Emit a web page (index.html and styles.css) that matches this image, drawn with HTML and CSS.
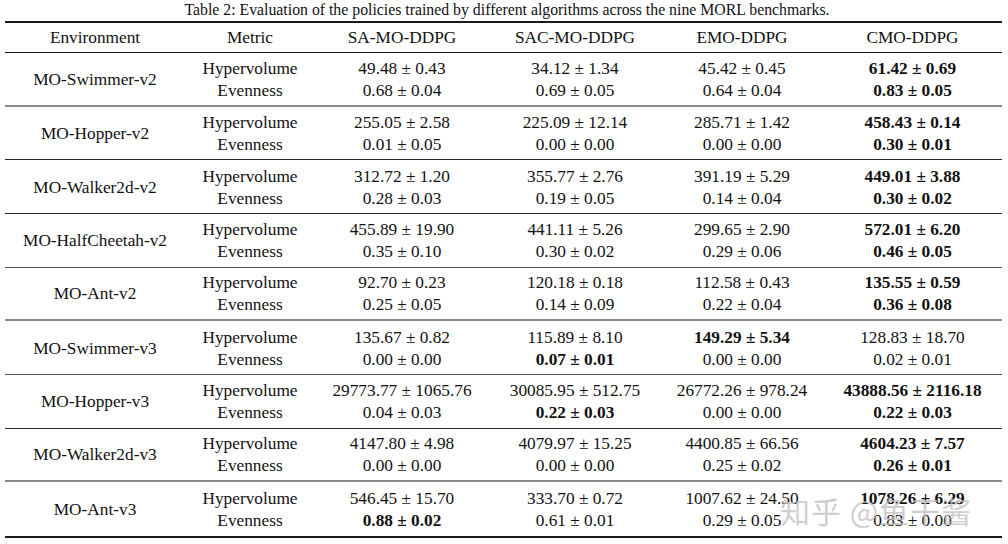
FILE: index.html
```html
<!DOCTYPE html>
<html>
<head>
<meta charset="utf-8">
<link rel="stylesheet" href="styles.css">
</head>
<body>
<div class="page">
  <div class="caption">Table 2: Evaluation of the policies trained by different algorithms across the nine MORL benchmarks.</div>
  <div class="table">
    <div class="row head">
      <div class="cell">Environment</div>
      <div class="cell">Metric</div>
      <div class="cell">SA-MO-DDPG</div>
      <div class="cell">SAC-MO-DDPG</div>
      <div class="cell">EMO-DDPG</div>
      <div class="cell">CMO-DDPG</div>
    </div>
    <div class="row line-gray">
      <div class="cell">MO-Swimmer-v2</div>
      <div class="cell"><span>Hypervolume</span><span>Evenness</span></div>
      <div class="cell"><span>49.48 ± 0.43</span><span>0.68 ± 0.04</span></div>
      <div class="cell"><span>34.12 ± 1.34</span><span>0.69 ± 0.05</span></div>
      <div class="cell"><span>45.42 ± 0.45</span><span>0.64 ± 0.04</span></div>
      <div class="cell"><b>61.42 ± 0.69</b><b>0.83 ± 0.05</b></div>
    </div>
    <div class="row">
      <div class="cell">MO-Hopper-v2</div>
      <div class="cell"><span>Hypervolume</span><span>Evenness</span></div>
      <div class="cell"><span>255.05 ± 2.58</span><span>0.01 ± 0.05</span></div>
      <div class="cell"><span>225.09 ± 12.14</span><span>0.00 ± 0.00</span></div>
      <div class="cell"><span>285.71 ± 1.42</span><span>0.00 ± 0.00</span></div>
      <div class="cell"><b>458.43 ± 0.14</b><b>0.30 ± 0.01</b></div>
    </div>
    <div class="row">
      <div class="cell">MO-Walker2d-v2</div>
      <div class="cell"><span>Hypervolume</span><span>Evenness</span></div>
      <div class="cell"><span>312.72 ± 1.20</span><span>0.28 ± 0.03</span></div>
      <div class="cell"><span>355.77 ± 2.76</span><span>0.19 ± 0.05</span></div>
      <div class="cell"><span>391.19 ± 5.29</span><span>0.14 ± 0.04</span></div>
      <div class="cell"><b>449.01 ± 3.88</b><b>0.30 ± 0.02</b></div>
    </div>
    <div class="row line-dark">
      <div class="cell">MO-HalfCheetah-v2</div>
      <div class="cell"><span>Hypervolume</span><span>Evenness</span></div>
      <div class="cell"><span>455.89 ± 19.90</span><span>0.35 ± 0.10</span></div>
      <div class="cell"><span>441.11 ± 5.26</span><span>0.30 ± 0.02</span></div>
      <div class="cell"><span>299.65 ± 2.90</span><span>0.29 ± 0.06</span></div>
      <div class="cell"><b>572.01 ± 6.20</b><b>0.46 ± 0.05</b></div>
    </div>
    <div class="row line-gray">
      <div class="cell">MO-Ant-v2</div>
      <div class="cell"><span>Hypervolume</span><span>Evenness</span></div>
      <div class="cell"><span>92.70 ± 0.23</span><span>0.25 ± 0.05</span></div>
      <div class="cell"><span>120.18 ± 0.18</span><span>0.14 ± 0.09</span></div>
      <div class="cell"><span>112.58 ± 0.43</span><span>0.22 ± 0.04</span></div>
      <div class="cell"><b>135.55 ± 0.59</b><b>0.36 ± 0.08</b></div>
    </div>
    <div class="row line-dark">
      <div class="cell">MO-Swimmer-v3</div>
      <div class="cell"><span>Hypervolume</span><span>Evenness</span></div>
      <div class="cell"><span>135.67 ± 0.82</span><span>0.00 ± 0.00</span></div>
      <div class="cell"><span>115.89 ± 8.10</span><b>0.07 ± 0.01</b></div>
      <div class="cell"><b>149.29 ± 5.34</b><span>0.00 ± 0.00</span></div>
      <div class="cell"><span>128.83 ± 18.70</span><span>0.02 ± 0.01</span></div>
    </div>
    <div class="row">
      <div class="cell">MO-Hopper-v3</div>
      <div class="cell"><span>Hypervolume</span><span>Evenness</span></div>
      <div class="cell"><span>29773.77 ± 1065.76</span><span>0.04 ± 0.03</span></div>
      <div class="cell"><span>30085.95 ± 512.75</span><b>0.22 ± 0.03</b></div>
      <div class="cell"><span>26772.26 ± 978.24</span><span>0.00 ± 0.00</span></div>
      <div class="cell"><b>43888.56 ± 2116.18</b><b>0.22 ± 0.03</b></div>
    </div>
    <div class="row line-gray">
      <div class="cell">MO-Walker2d-v3</div>
      <div class="cell"><span>Hypervolume</span><span>Evenness</span></div>
      <div class="cell"><span>4147.80 ± 4.98</span><span>0.00 ± 0.00</span></div>
      <div class="cell"><span>4079.97 ± 15.25</span><span>0.00 ± 0.00</span></div>
      <div class="cell"><span>4400.85 ± 66.56</span><span>0.25 ± 0.02</span></div>
      <div class="cell"><b>4604.23 ± 7.57</b><b>0.26 ± 0.01</b></div>
    </div>
    <div class="row last">
      <div class="cell">MO-Ant-v3</div>
      <div class="cell"><span>Hypervolume</span><span>Evenness</span></div>
      <div class="cell"><span>546.45 ± 15.70</span><b>0.88 ± 0.02</b></div>
      <div class="cell"><span>333.70 ± 0.72</span><span>0.61 ± 0.01</span></div>
      <div class="cell"><span>1007.62 ± 24.50</span><span>0.29 ± 0.05</span></div>
      <div class="cell"><b>1078.26 ± 6.29</b><span>0.83 ± 0.00</span></div>
    </div>
  </div>
  <div class="watermark">知乎 @鱼干酱</div>
</div>
</body>
</html>
```

FILE: styles.css
```css
html, body {
  margin: 0;
  padding: 0;
  background: #ffffff;
}

.page {
  position: relative;
  width: 1008px;
  height: 544px;
  font-family: "Liberation Serif", "Times New Roman", serif;
  color: #111111;
}

.caption {
  height: 21px;
  line-height: 20px;
  font-size: 15.8px;
  text-align: center;
  padding-left: 6px;
}

.table {
  margin-left: 5px;
  width: 997px;
  border-top: 2px solid #1a1a1a;
  border-bottom: 2px solid #1a1a1a;
}

.row {
  display: grid;
  grid-template-columns: 180px 130px 174px 172px 162px 179px;
  height: 53.67px;
  border-bottom: 1px solid #2a2a2a;
  box-sizing: border-box;
  font-size: 17.3px;
}

.row.head {
  height: 30px;
  border-bottom: 1px solid #111111;
}

.row.line-gray {
  border-bottom: 2px solid #8a8a8a;
}

.row.line-dark {
  border-bottom: 1px solid #555555;
}

.row.last {
  border-bottom: none;
}

.cell {
  display: flex;
  flex-direction: column;
  align-items: center;
  justify-content: center;
  line-height: 22px;
  padding-top: 2px;
  white-space: nowrap;
}

.head .cell {
  padding-top: 0;
}

.cell b {
  font-weight: bold;
}

.watermark {
  position: absolute;
  left: 780px;
  top: 490px;
  font-family: "Noto Sans CJK SC", sans-serif;
  font-size: 30px;
  line-height: 40px;
  color: rgba(190, 190, 190, 0.75);
  letter-spacing: 1px;
}
```
